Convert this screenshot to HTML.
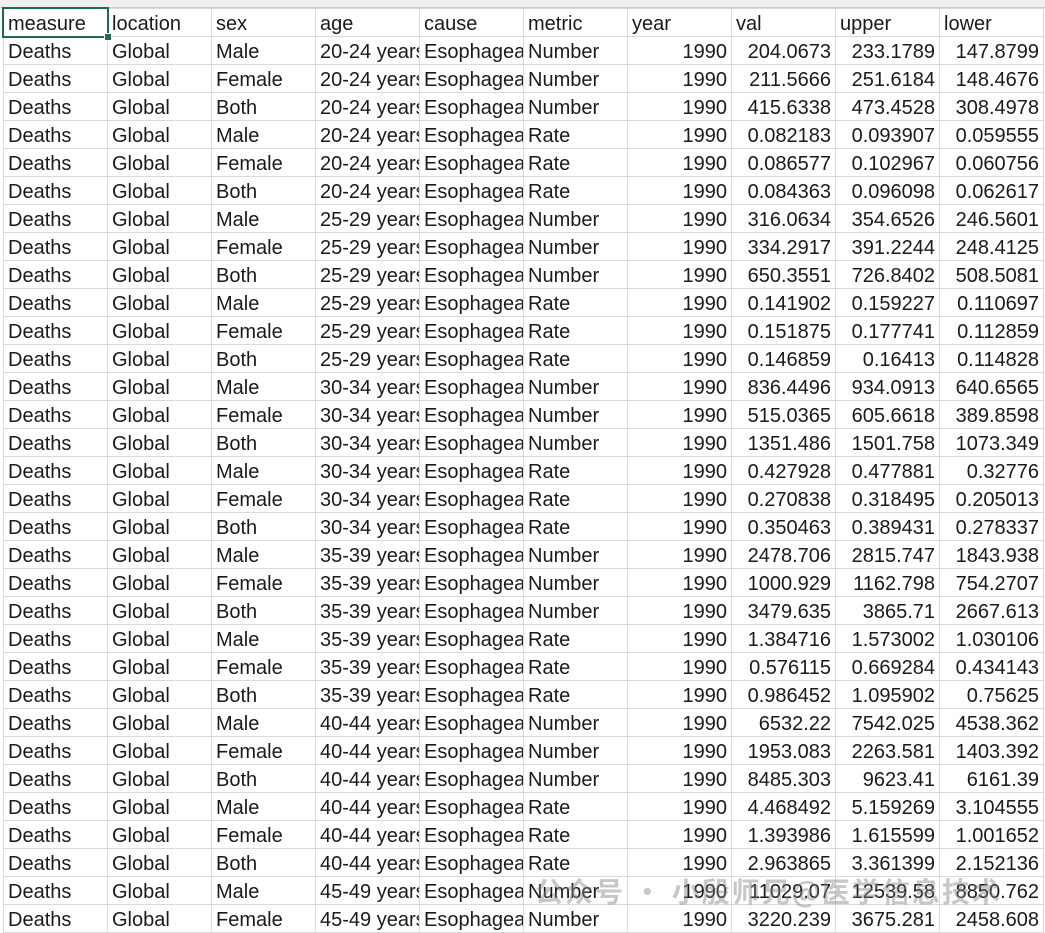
<!DOCTYPE html>
<html><head><meta charset="utf-8"><style>
html,body{margin:0;padding:0;background:#fff;width:1045px;height:933px;overflow:hidden;position:relative}
.top{position:absolute;left:0;top:0;width:1045px;height:7px;background:#efefef;border-bottom:1px solid #c8c8c8}
table{position:absolute;left:3px;top:8px;border-collapse:collapse;table-layout:fixed;font-family:"Liberation Sans","Noto Sans CJK SC",sans-serif;font-size:20px;color:#1a1a1a}
td{width:103px;height:27px;padding:3px 0 0 4px;border:1px solid #dadada;white-space:nowrap;overflow:hidden;line-height:24px;vertical-align:top;box-sizing:border-box;max-width:104px}
col{width:104px}
td.n{text-align:right;padding:3px 4px 0 0}
.sel{position:absolute;left:2px;top:7px;width:103px;height:27px;border:2px solid #1f6b43}
.sel:after{content:"";position:absolute;right:-5px;bottom:-5px;width:6px;height:6px;background:#1f6b43;border:1px solid #fff}
.wm{position:absolute;left:535px;top:871px;font-family:"Noto Sans CJK SC",sans-serif;font-size:28px;font-weight:bold;color:rgba(130,130,130,0.45);white-space:nowrap;letter-spacing:2px}
</style></head><body>
<div class="top"></div>
<table>
<colgroup><col><col><col><col><col><col><col><col><col><col></colgroup>
<tr><td>measure</td><td>location</td><td>sex</td><td>age</td><td>cause</td><td>metric</td><td>year</td><td>val</td><td>upper</td><td>lower</td></tr>
<tr><td>Deaths</td><td>Global</td><td>Male</td><td>20-24 years</td><td>Esophageal</td><td>Number</td><td class="n">1990</td><td class="n">204.0673</td><td class="n">233.1789</td><td class="n">147.8799</td></tr>
<tr><td>Deaths</td><td>Global</td><td>Female</td><td>20-24 years</td><td>Esophageal</td><td>Number</td><td class="n">1990</td><td class="n">211.5666</td><td class="n">251.6184</td><td class="n">148.4676</td></tr>
<tr><td>Deaths</td><td>Global</td><td>Both</td><td>20-24 years</td><td>Esophageal</td><td>Number</td><td class="n">1990</td><td class="n">415.6338</td><td class="n">473.4528</td><td class="n">308.4978</td></tr>
<tr><td>Deaths</td><td>Global</td><td>Male</td><td>20-24 years</td><td>Esophageal</td><td>Rate</td><td class="n">1990</td><td class="n">0.082183</td><td class="n">0.093907</td><td class="n">0.059555</td></tr>
<tr><td>Deaths</td><td>Global</td><td>Female</td><td>20-24 years</td><td>Esophageal</td><td>Rate</td><td class="n">1990</td><td class="n">0.086577</td><td class="n">0.102967</td><td class="n">0.060756</td></tr>
<tr><td>Deaths</td><td>Global</td><td>Both</td><td>20-24 years</td><td>Esophageal</td><td>Rate</td><td class="n">1990</td><td class="n">0.084363</td><td class="n">0.096098</td><td class="n">0.062617</td></tr>
<tr><td>Deaths</td><td>Global</td><td>Male</td><td>25-29 years</td><td>Esophageal</td><td>Number</td><td class="n">1990</td><td class="n">316.0634</td><td class="n">354.6526</td><td class="n">246.5601</td></tr>
<tr><td>Deaths</td><td>Global</td><td>Female</td><td>25-29 years</td><td>Esophageal</td><td>Number</td><td class="n">1990</td><td class="n">334.2917</td><td class="n">391.2244</td><td class="n">248.4125</td></tr>
<tr><td>Deaths</td><td>Global</td><td>Both</td><td>25-29 years</td><td>Esophageal</td><td>Number</td><td class="n">1990</td><td class="n">650.3551</td><td class="n">726.8402</td><td class="n">508.5081</td></tr>
<tr><td>Deaths</td><td>Global</td><td>Male</td><td>25-29 years</td><td>Esophageal</td><td>Rate</td><td class="n">1990</td><td class="n">0.141902</td><td class="n">0.159227</td><td class="n">0.110697</td></tr>
<tr><td>Deaths</td><td>Global</td><td>Female</td><td>25-29 years</td><td>Esophageal</td><td>Rate</td><td class="n">1990</td><td class="n">0.151875</td><td class="n">0.177741</td><td class="n">0.112859</td></tr>
<tr><td>Deaths</td><td>Global</td><td>Both</td><td>25-29 years</td><td>Esophageal</td><td>Rate</td><td class="n">1990</td><td class="n">0.146859</td><td class="n">0.16413</td><td class="n">0.114828</td></tr>
<tr><td>Deaths</td><td>Global</td><td>Male</td><td>30-34 years</td><td>Esophageal</td><td>Number</td><td class="n">1990</td><td class="n">836.4496</td><td class="n">934.0913</td><td class="n">640.6565</td></tr>
<tr><td>Deaths</td><td>Global</td><td>Female</td><td>30-34 years</td><td>Esophageal</td><td>Number</td><td class="n">1990</td><td class="n">515.0365</td><td class="n">605.6618</td><td class="n">389.8598</td></tr>
<tr><td>Deaths</td><td>Global</td><td>Both</td><td>30-34 years</td><td>Esophageal</td><td>Number</td><td class="n">1990</td><td class="n">1351.486</td><td class="n">1501.758</td><td class="n">1073.349</td></tr>
<tr><td>Deaths</td><td>Global</td><td>Male</td><td>30-34 years</td><td>Esophageal</td><td>Rate</td><td class="n">1990</td><td class="n">0.427928</td><td class="n">0.477881</td><td class="n">0.32776</td></tr>
<tr><td>Deaths</td><td>Global</td><td>Female</td><td>30-34 years</td><td>Esophageal</td><td>Rate</td><td class="n">1990</td><td class="n">0.270838</td><td class="n">0.318495</td><td class="n">0.205013</td></tr>
<tr><td>Deaths</td><td>Global</td><td>Both</td><td>30-34 years</td><td>Esophageal</td><td>Rate</td><td class="n">1990</td><td class="n">0.350463</td><td class="n">0.389431</td><td class="n">0.278337</td></tr>
<tr><td>Deaths</td><td>Global</td><td>Male</td><td>35-39 years</td><td>Esophageal</td><td>Number</td><td class="n">1990</td><td class="n">2478.706</td><td class="n">2815.747</td><td class="n">1843.938</td></tr>
<tr><td>Deaths</td><td>Global</td><td>Female</td><td>35-39 years</td><td>Esophageal</td><td>Number</td><td class="n">1990</td><td class="n">1000.929</td><td class="n">1162.798</td><td class="n">754.2707</td></tr>
<tr><td>Deaths</td><td>Global</td><td>Both</td><td>35-39 years</td><td>Esophageal</td><td>Number</td><td class="n">1990</td><td class="n">3479.635</td><td class="n">3865.71</td><td class="n">2667.613</td></tr>
<tr><td>Deaths</td><td>Global</td><td>Male</td><td>35-39 years</td><td>Esophageal</td><td>Rate</td><td class="n">1990</td><td class="n">1.384716</td><td class="n">1.573002</td><td class="n">1.030106</td></tr>
<tr><td>Deaths</td><td>Global</td><td>Female</td><td>35-39 years</td><td>Esophageal</td><td>Rate</td><td class="n">1990</td><td class="n">0.576115</td><td class="n">0.669284</td><td class="n">0.434143</td></tr>
<tr><td>Deaths</td><td>Global</td><td>Both</td><td>35-39 years</td><td>Esophageal</td><td>Rate</td><td class="n">1990</td><td class="n">0.986452</td><td class="n">1.095902</td><td class="n">0.75625</td></tr>
<tr><td>Deaths</td><td>Global</td><td>Male</td><td>40-44 years</td><td>Esophageal</td><td>Number</td><td class="n">1990</td><td class="n">6532.22</td><td class="n">7542.025</td><td class="n">4538.362</td></tr>
<tr><td>Deaths</td><td>Global</td><td>Female</td><td>40-44 years</td><td>Esophageal</td><td>Number</td><td class="n">1990</td><td class="n">1953.083</td><td class="n">2263.581</td><td class="n">1403.392</td></tr>
<tr><td>Deaths</td><td>Global</td><td>Both</td><td>40-44 years</td><td>Esophageal</td><td>Number</td><td class="n">1990</td><td class="n">8485.303</td><td class="n">9623.41</td><td class="n">6161.39</td></tr>
<tr><td>Deaths</td><td>Global</td><td>Male</td><td>40-44 years</td><td>Esophageal</td><td>Rate</td><td class="n">1990</td><td class="n">4.468492</td><td class="n">5.159269</td><td class="n">3.104555</td></tr>
<tr><td>Deaths</td><td>Global</td><td>Female</td><td>40-44 years</td><td>Esophageal</td><td>Rate</td><td class="n">1990</td><td class="n">1.393986</td><td class="n">1.615599</td><td class="n">1.001652</td></tr>
<tr><td>Deaths</td><td>Global</td><td>Both</td><td>40-44 years</td><td>Esophageal</td><td>Rate</td><td class="n">1990</td><td class="n">2.963865</td><td class="n">3.361399</td><td class="n">2.152136</td></tr>
<tr><td>Deaths</td><td>Global</td><td>Male</td><td>45-49 years</td><td>Esophageal</td><td>Number</td><td class="n">1990</td><td class="n">11029.07</td><td class="n">12539.58</td><td class="n">8850.762</td></tr>
<tr><td>Deaths</td><td>Global</td><td>Female</td><td>45-49 years</td><td>Esophageal</td><td>Number</td><td class="n">1990</td><td class="n">3220.239</td><td class="n">3675.281</td><td class="n">2458.608</td></tr>
</table>
<div class="sel"></div>
<div class="wm">公众号 · 小殷师兄@医学信息技术</div>
</body></html>
